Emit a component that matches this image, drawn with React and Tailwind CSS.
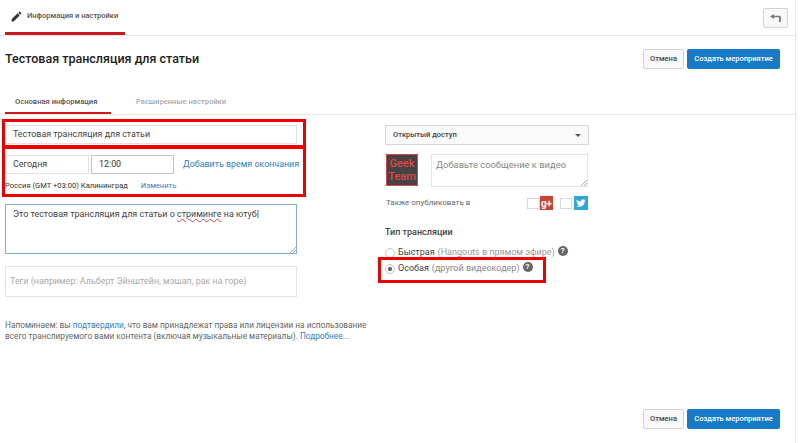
function Actions() {
  return (
    <div className="flex gap-[3px]">
      <button type="button" className="h-[20px] w-[41px] rounded-[2px] border border-[#d3d3d3] bg-[#f8f8f8] text-[7.5px] font-medium text-[#444]">
        Отмена
      </button>
      <button type="button" className="h-[20px] w-[93px] rounded-[2px] bg-[#167ac6] text-[7.5px] font-medium text-white">
        Создать мероприятие
      </button>
    </div>
  )
}

function Help({ className }) {
  return (
    <span className={`inline-flex h-[10px] w-[10px] items-center justify-center rounded-full bg-[#666] text-[8px] font-bold leading-none text-white ${className}`}>
      ?
    </span>
  )
}

function Resize() {
  return (
    <svg className="absolute bottom-0 right-0 h-[6px] w-[6px]" viewBox="0 0 6 6">
      <path d="M0 6 6 0M3 6 6 3" stroke="#888" strokeWidth="0.7" />
    </svg>
  )
}

function RedBox({ className }) {
  return <div className={`pointer-events-none absolute border-[3px] border-[#f00000] ${className}`} />
}

export default function App() {
  return (
    <div className="relative flex h-[443px] w-[800px] overflow-hidden bg-white font-['Roboto',sans-serif] text-[#333]">
      <div className="flex w-[796px] flex-col border-r border-[#e8e8e8]">
        <div className="flex h-[36px] shrink-0 items-stretch justify-between border-b border-[#e8e8e8] pl-[5px] pr-[7px]">
          <div className="flex h-[35px] w-[120px] items-center gap-[4px] border-b-[3px] border-[#cc181e] pl-[5px]">
            <svg className="h-[13px] w-[13px]" viewBox="0 0 24 24" fill="#333">
              <path d="M3 17.25V21h3.750L17.810 9.940l-3.750-3.750L3 17.250zM20.710 7.040a1 1 0 0 0 0-1.410l-2.340-2.340a1 1 0 0 0-1.410 0l-1.830 1.830 3.750 3.750 1.830-1.830z" />
            </svg>
            <span className="whitespace-nowrap text-[7.5px] font-medium text-[#555]">Информация и настройки</span>
          </div>
          <div className="flex items-center">
            <button type="button" className="flex h-[20px] w-[25px] items-center justify-center rounded-[2px] border border-[#d3d3d3] bg-[#f8f8f8]">
              <svg className="h-[8px] w-[11px]" viewBox="0 0 11 8" fill="#777">
                <path d="M0 2.500 4 0v1.700h5.500c.8 0 1.300.5 1.300 1.300V8H9V3.300H4V5z" />
              </svg>
            </button>
          </div>
        </div>

        <div className="flex items-center justify-between pl-[5px] pr-[15px] pt-[13px]">
          <h1 className="text-[12.5px] font-medium leading-[20px] text-[#222]">Тестовая трансляция для статьи</h1>
          <Actions />
        </div>

        <div className="mt-[26px] flex h-[20px] items-start border-b border-[#e8e8e8] pl-[5px] text-[7.6px] font-medium">
          <div className="h-[19px] w-[106px] border-b-[2px] border-[#cc181e] pl-[10px] pt-[1px] text-[#555]">Основная информация</div>
          <div className="ml-[25px] pt-[1px] text-[#aaa]">Расширенные настройки</div>
        </div>

        <div className="flex flex-1 pl-[5px] pt-[10px]">
          <div className="w-[292px] shrink-0">
            <div className="flex h-[19px] items-center border border-[#e3e3e3] pl-[7px] text-[8.9px] text-[#444]">
              Тестовая трансляция для статьи
            </div>
            <div className="mt-[11px] flex items-center">
              <div className="flex h-[19px] w-[84px] shrink-0 items-center border border-[#e3e3e3] pl-[7px] text-[8.9px] text-[#444]">Сегодня</div>
              <div className="ml-[2px] flex h-[19px] w-[83px] shrink-0 items-center border border-[#c4c4c4] pl-[7px] text-[8.9px] text-[#333]">12:00</div>
              <a className="ml-[9px] shrink-0 whitespace-nowrap text-[8.9px] text-[#2f7fc7]">Добавить время окончания</a>
            </div>
            <div className="mt-[6px] flex h-[11px] items-center text-[7.6px] text-[#333]">
              <span>Россия (GMT +03:00) Калининград</span>
              <a className="ml-[13px] text-[#2f7fc7]">Изменить</a>
            </div>
            <div className="relative mt-[13px] h-[50px] border border-[#7fb1de] pl-[7px] pt-[2px] text-[8.95px] leading-[14px] text-[#444]">
              Это тестовая трансляция для статьи о <span className="underline decoration-wavy decoration-[#e04040] decoration-[0.5px]">стриминге</span> на ютуб<span className="text-[#222]">|</span>
              <Resize />
            </div>
            <div className="mt-[12px] flex h-[31px] items-center border border-[#e3e3e3] pl-[4px] text-[8.93px] text-[#aaa]">
              Теги (например: Альберт Эйнштейн, мэшап, рак на горе)
            </div>
            <p className="mt-[23px] w-[372px] text-[8.27px] leading-[11px] text-[#666]">
              Напоминаем: вы <a className="text-[#2f7fc7]">подтвердили</a>, что вам принадлежат права или лицензии на использование всего транслируемого вами контента (включая музыкальные материалы). <a className="text-[#2f7fc7]">Подробнее...</a>
            </p>
          </div>

          <div className="ml-[88px] w-[204px] shrink-0">
            <div className="flex h-[20px] items-center justify-between border border-[#d8d8d8] bg-[#fafafa] px-[7px] text-[7.5px] font-medium text-[#444]">
              Открытый доступ
              <span className="h-0 w-0 border-x-[3px] border-t-[3px] border-x-transparent border-t-[#555]" />
            </div>
            <div className="mt-[9px] flex items-start">
              <div className="ml-[1px] flex h-[32px] w-[32px] shrink-0 flex-col items-center justify-center border border-[#e04545] bg-[#444] text-[11px] font-medium leading-[13px] text-[#e04545]">
                <span>Geek</span>
                <span>Team</span>
              </div>
              <div className="relative ml-[13px] h-[33px] w-[157px] border border-[#e3e3e3] pl-[4px] pt-[3px] text-[9.4px] leading-[14px] text-[#888]">
                Добавьте сообщение к видео
                <Resize />
              </div>
            </div>
            <div className="mt-[9px] flex h-[14px] items-center text-[8px] text-[#666]">
              <span className="ml-[1px] w-[141px] shrink-0 whitespace-nowrap">Также опубликовать в</span>
              <span className="h-[11px] w-[13px] shrink-0 border border-[#d8d8d8]" />
              <span className="flex h-[14px] w-[13px] shrink-0 items-center justify-center bg-[#d0402f] text-[10px] font-bold text-white">g+</span>
              <span className="ml-[7px] h-[11px] w-[12px] shrink-0 border border-[#d8d8d8]" />
              <span className="ml-[2px] flex h-[14px] w-[14px] shrink-0 items-center justify-center bg-[#2da7df]">
                <svg className="h-[10px] w-[10px]" viewBox="0 0 24 24" fill="#fff">
                  <path d="M23 5c-.8.4-1.700.6-2.600.7.900-.6 1.600-1.400 2-2.500-.9.500-1.900.9-2.900 1.100A4.600 4.600 0 0 0 11.700 8.500C7.900 8.300 4.500 6.500 2.200 3.700c-1.200 2.100-.6 4.800 1.400 6.100-.7 0-1.400-.2-2.100-.6 0 2.200 1.600 4.200 3.700 4.600-.7.200-1.400.2-2.100.1.600 1.900 2.300 3.200 4.300 3.200A9.300 9.300 0 0 1 .6 19c2.100 1.300 4.500 2.100 7.100 2.100 8.600 0 13.500-7.300 13.200-13.800.9-.6 1.700-1.400 2.100-2.300z" />
                </svg>
              </span>
            </div>
            <div className="mt-[16px] text-[9px] font-medium leading-[12px] text-[#444]">Тип трансляции</div>
            <div className="mt-[8px] flex h-[14px] items-center whitespace-nowrap text-[9px]">
              <span className="h-[10px] w-[10px] shrink-0 rounded-full border border-[#c4c4c4]" />
              <span className="ml-[3px] text-[#444]">Быстрая</span>
              <span className="ml-[3px] text-[#999]">(Hangouts в прямом эфире)</span>
              <Help className="ml-[3px] -translate-y-[2px]" />
            </div>
            <div className="mt-[2px] flex h-[14px] items-center whitespace-nowrap text-[9px]">
              <span className="flex h-[10px] w-[10px] shrink-0 items-center justify-center rounded-full border border-[#c4c4c4]">
                <span className="h-[4px] w-[4px] rounded-full bg-[#555]" />
              </span>
              <span className="ml-[3px] text-[#444]">Особая</span>
              <span className="ml-[3px] text-[#888]">(другой видеокодер)</span>
              <Help className="ml-[3px] -translate-y-[2px]" />
            </div>
          </div>
        </div>

        <div className="flex justify-end pb-[14px] pr-[15px]">
          <Actions />
        </div>
      </div>

      <RedBox className="left-[2px] top-[119px] h-[29px] w-[304px]" />
      <RedBox className="left-[2px] top-[146px] h-[51px] w-[304px]" />
      <RedBox className="left-[378px] top-[257px] h-[26px] w-[168px]" />
    </div>
  )
}
